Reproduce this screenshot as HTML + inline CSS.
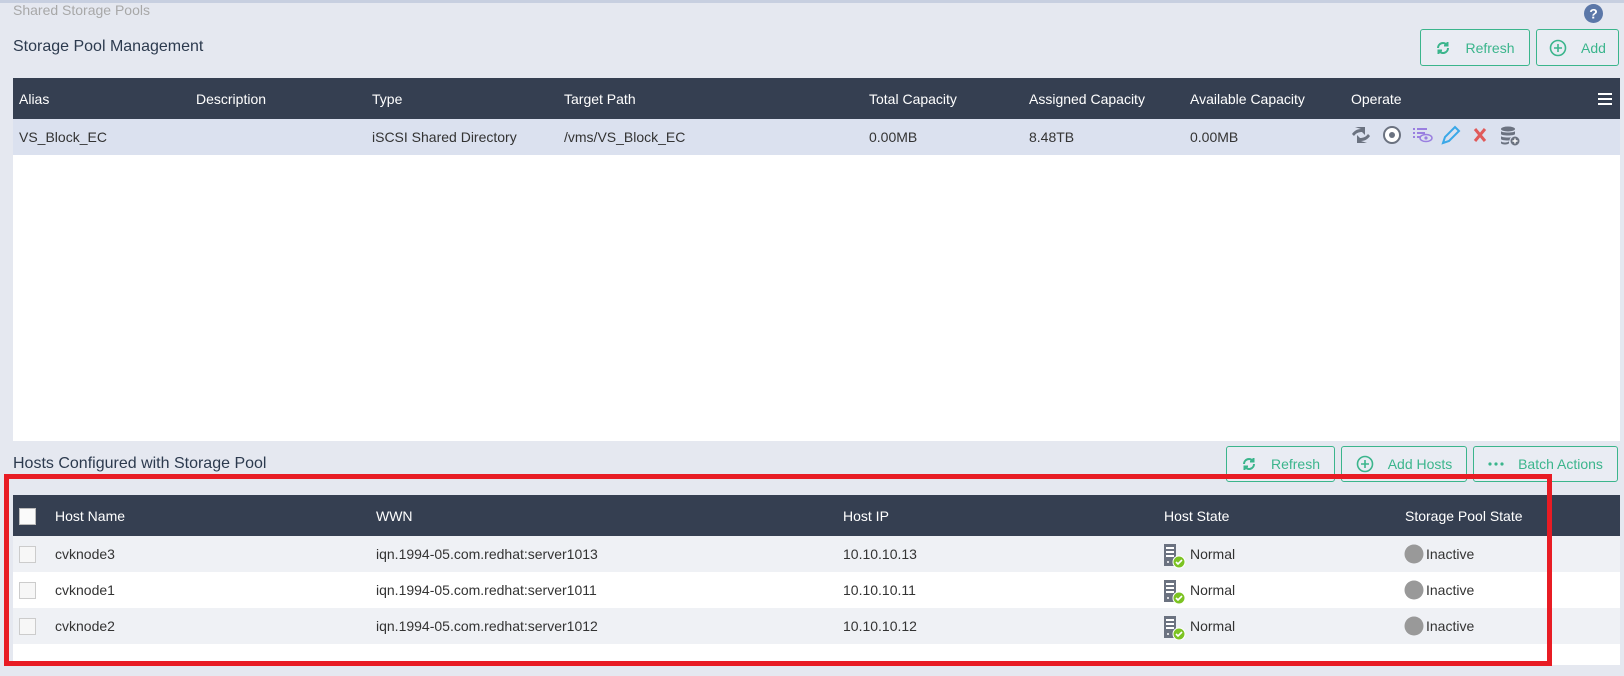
<!DOCTYPE html>
<html><head><meta charset="utf-8"><style>
*{margin:0;padding:0;box-sizing:border-box}
body{width:1624px;height:676px;background:#e5e8f0;font-family:"Liberation Sans",Arial,sans-serif;font-size:14px;color:#333;position:relative;overflow:hidden}
.a{position:absolute;white-space:nowrap}
.btn{position:absolute;border:1px solid #3bb58c;border-radius:3px;color:#3bb58c;font-size:14px;display:flex;align-items:center;justify-content:center;gap:14px;background:#e9ecf3}
.hd{position:absolute;background:#353f51;color:#fff}
.hd span,.row span{position:absolute;top:50%;transform:translateY(-50%);white-space:nowrap}
.row{position:absolute;left:13px;width:1607px;height:36px}
.cb{position:absolute;left:6px;top:50%;margin-top:-8px;width:17px;height:17px;border:1px solid #ccc;background:#f7f7f7}
</style></head><body>
<div class="a" style="left:0;top:0;width:1624px;height:3px;background:#c7cfe0"></div>
<div class="a" style="left:13px;top:2px;color:#a8a8a8;font-size:14px">Shared Storage Pools</div>
<div class="a" style="left:13px;top:38px;font-size:16px;color:#2c3a4e">Storage Pool Management</div>
<svg class="a" style="left:1584px;top:4px" width="19" height="19" viewBox="0 0 19 19"><circle cx="9.5" cy="9.5" r="9.5" fill="#5b77a8"/><text x="9.5" y="14.5" text-anchor="middle" font-family="Liberation Sans" font-weight="bold" font-size="14" fill="#fff">?</text></svg>

<div class="btn" style="left:1420px;top:29px;width:110px;height:37px"><svg width="16" height="16" viewBox="0 0 16 16" fill="none" stroke="#3bb58c" stroke-width="2"><path d="M3 8a5 5 0 0 1 9-3"/><path d="M13 8a5 5 0 0 1-9 3"/><path d="M12.5 2v3.5H9" /><path d="M3.5 14v-3.5H7"/></svg>Refresh</div>
<div class="btn" style="left:1536px;top:29px;width:83px;height:37px"><svg width="18" height="18" viewBox="0 0 18 18" fill="none" stroke="#3bb58c" stroke-width="1.6"><circle cx="9" cy="9" r="7.5"/><path d="M9 5v8M5 9h8"/></svg>Add</div>

<div class="a" style="left:13px;top:78px;width:1607px;height:363px;background:#fff"></div>
<div class="hd" style="left:13px;top:78px;width:1607px;height:41px">
<span style="left:6px">Alias</span><span style="left:183px">Description</span><span style="left:359px">Type</span><span style="left:551px">Target Path</span><span style="left:856px">Total Capacity</span><span style="left:1016px">Assigned Capacity</span><span style="left:1177px">Available Capacity</span><span style="left:1338px">Operate</span>
<span style="left:1585px;width:14px;height:12px;border-top:2px solid #fff;border-bottom:2px solid #fff"><i style="position:absolute;left:0;top:3px;width:14px;height:2px;background:#fff"></i></span>
</div>
<div class="row" style="top:119px;background:#dbe1ef;height:36px">
<span style="left:6px">VS_Block_EC</span><span style="left:359px">iSCSI Shared Directory</span><span style="left:551px">/vms/VS_Block_EC</span><span style="left:856px">0.00MB</span><span style="left:1016px">8.48TB</span><span style="left:1177px">0.00MB</span>
</div>
<svg class="a" style="left:1340px;top:124px" width="180" height="24" viewBox="0 0 180 24">
<g fill="#6b7280"><path d="M15 3h10v8l-3-3c-3 0-6 1-8 4l-2-2c2-3 5-5 9-5z"/><path d="M27 19H17v-8l3 3c3 0 6-1 8-4l2 2c-2 3-5 5-9 5z"/></g>
<circle cx="52" cy="11" r="8" fill="#fff" stroke="#6b7280" stroke-width="2"/><circle cx="52" cy="11" r="3" fill="#6b7280"/>
<g fill="#9a7fe0"><rect x="73" y="4" width="2" height="2"/><rect x="77" y="4" width="10" height="2"/><rect x="73" y="8" width="2" height="2"/><rect x="77" y="8" width="8" height="2"/><rect x="73" y="12" width="2" height="2"/><rect x="77" y="12" width="4" height="2"/></g>
<ellipse cx="86" cy="14" rx="6" ry="3.5" fill="none" stroke="#9a7fe0" stroke-width="1.5"/><circle cx="86" cy="14" r="1.6" fill="#9a7fe0"/>
<path d="M103 19l2-6 10-10 4 4-10 10z" fill="none" stroke="#3aa8e8" stroke-width="2"/>
<path d="M135 5l10 12M145 5l-10 12" stroke="#e05a5a" stroke-width="3"/>
<g fill="#6b7280"><ellipse cx="168" cy="5" rx="7" ry="2.5"/><path d="M161 7c0 2 14 2 14 0v3c0 2-14 2-14 0z"/><path d="M161 12c0 2 14 2 14 0v3c0 2-14 2-14 0z"/><path d="M161 17c0 2 8 2 8 0v2c0 2-8 2-8 0z"/></g>
<circle cx="175" cy="17" r="5" fill="#6b7280" stroke="#dbe1ef" stroke-width="1"/><path d="M172.5 17h5M175 14.5v5" stroke="#fff" stroke-width="1.4"/>
</svg>

<div class="a" style="left:13px;top:455px;font-size:16px;color:#2c3a4e">Hosts Configured with Storage Pool</div>
<div class="btn" style="left:1226px;top:446px;width:109px;height:36px"><svg width="16" height="16" viewBox="0 0 16 16" fill="none" stroke="#3bb58c" stroke-width="2"><path d="M3 8a5 5 0 0 1 9-3"/><path d="M13 8a5 5 0 0 1-9 3"/><path d="M12.5 2v3.5H9"/><path d="M3.5 14v-3.5H7"/></svg>Refresh</div>
<div class="btn" style="left:1341px;top:446px;width:126px;height:36px"><svg width="18" height="18" viewBox="0 0 18 18" fill="none" stroke="#3bb58c" stroke-width="1.6"><circle cx="9" cy="9" r="7.5"/><path d="M9 5v8M5 9h8"/></svg>Add Hosts</div>
<div class="btn" style="left:1473px;top:446px;width:145px;height:36px"><svg width="16" height="4" viewBox="0 0 16 4" fill="#3bb58c"><circle cx="2" cy="2" r="1.6"/><circle cx="8" cy="2" r="1.6"/><circle cx="14" cy="2" r="1.6"/></svg>Batch Actions</div>

<div class="a" style="left:13px;top:495px;width:1607px;height:170px;background:#fff"></div>
<div class="hd" style="left:13px;top:495px;width:1607px;height:41px">
<div class="cb" style="border-color:#bbb;background:#fafafa"></div>
<span style="left:42px">Host Name</span><span style="left:363px">WWN</span><span style="left:830px">Host IP</span><span style="left:1151px">Host State</span><span style="left:1392px">Storage Pool State</span>
</div>
<div class="row" style="top:536px;background:#eff1f5"><div class="cb"></div><span style="left:42px">cvknode3</span><span style="left:363px">iqn.1994-05.com.redhat:server1013</span><span style="left:830px">10.10.10.13</span><span style="left:1177px">Normal</span><span style="left:1413px">Inactive</span></div>
<div class="row" style="top:572px;background:#fff"><div class="cb"></div><span style="left:42px">cvknode1</span><span style="left:363px">iqn.1994-05.com.redhat:server1011</span><span style="left:830px">10.10.10.11</span><span style="left:1177px">Normal</span><span style="left:1413px">Inactive</span></div>
<div class="row" style="top:608px;background:#eff1f5"><div class="cb"></div><span style="left:42px">cvknode2</span><span style="left:363px">iqn.1994-05.com.redhat:server1012</span><span style="left:830px">10.10.10.12</span><span style="left:1177px">Normal</span><span style="left:1413px">Inactive</span></div>

<svg class="a" style="left:1163px;top:544px" width="24" height="96" viewBox="0 0 24 96">
<g id="s"><rect x="1" y="0" width="12" height="22" fill="#6b7280"/><rect x="3" y="3" width="8" height="2" fill="#fff"/><rect x="3" y="7" width="8" height="2" fill="#fff"/><rect x="3" y="11" width="8" height="2" fill="#fff"/><circle cx="5" cy="18" r="1" fill="#fff"/><circle cx="16" cy="18" r="6" fill="#7cc322" stroke="#fff" stroke-width="1"/><path d="M13 18l2 2 4-4" stroke="#fff" stroke-width="1.6" fill="none"/></g>
<use href="#s" y="36"/><use href="#s" y="72"/>
</svg>
<svg class="a" style="left:1404px;top:544px" width="20" height="92" viewBox="0 0 20 92" fill="#999"><circle cx="10" cy="10" r="9.5"/><circle cx="10" cy="46" r="9.5"/><circle cx="10" cy="82" r="9.5"/></svg>

<div class="a" style="left:4px;top:474px;width:1548px;height:192px;border:5px solid #e81c24"></div>
</body></html>
